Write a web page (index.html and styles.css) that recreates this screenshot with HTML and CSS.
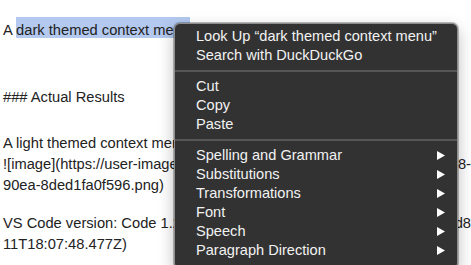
FILE: index.html
```html
<!DOCTYPE html>
<html lang="en">
<head>
<meta charset="utf-8">
<title>Context menu</title>
<link rel="stylesheet" href="styles.css">
</head>
<body>
<div class="doc">
  <p class="para p1"><span class="line">A <span class="sel">dark themed context menu</span></span></p>
  <p class="para p2"><span class="line">### Actual Results</span></p>
  <div class="para p3">
    <div class="line">A light themed context menu</div>
    <div class="line split"><span class="l">![image](https://user-images</span><span class="r">8-</span></div>
    <div class="line">90ea-8ded1fa0f596.png)</div>
  </div>
  <div class="para p4">
    <div class="line split"><span class="l">VS Code version: Code 1.256</span><span class="r">d8</span></div>
    <div class="line">11T18:07:48.477Z)</div>
  </div>
</div>

<div class="menu">
  <div class="item"><span>Look Up “dark themed context menu”</span></div>
  <div class="item"><span>Search with DuckDuckGo</span></div>
  <div class="sep"></div>
  <div class="item"><span>Cut</span></div>
  <div class="item"><span>Copy</span></div>
  <div class="item"><span>Paste</span></div>
  <div class="sep"></div>
  <div class="item"><span>Spelling and Grammar</span><svg class="arrow" viewBox="0 0 8 9" width="8" height="9"><polygon points="0,0 8,4.5 0,9"/></svg></div>
  <div class="item"><span>Substitutions</span><svg class="arrow" viewBox="0 0 8 9" width="8" height="9"><polygon points="0,0 8,4.5 0,9"/></svg></div>
  <div class="item"><span>Transformations</span><svg class="arrow" viewBox="0 0 8 9" width="8" height="9"><polygon points="0,0 8,4.5 0,9"/></svg></div>
  <div class="item"><span>Font</span><svg class="arrow" viewBox="0 0 8 9" width="8" height="9"><polygon points="0,0 8,4.5 0,9"/></svg></div>
  <div class="item"><span>Speech</span><svg class="arrow" viewBox="0 0 8 9" width="8" height="9"><polygon points="0,0 8,4.5 0,9"/></svg></div>
  <div class="item"><span>Paragraph Direction</span><svg class="arrow" viewBox="0 0 8 9" width="8" height="9"><polygon points="0,0 8,4.5 0,9"/></svg></div>
</div>
</body>
</html>
```

FILE: styles.css
```css
html, body {
  margin: 0;
  padding: 0;
  background: #ffffff;
  width: 471px;
  height: 265px;
  overflow: hidden;
}

.doc {
  padding: 20px 0 0 3px;
  font-family: "Liberation Sans", Arial, sans-serif;
  font-size: 14.7px;
  line-height: 21px;
  color: #222222;
}

.para {
  margin: 0;
}

.line {
  display: block;
  white-space: nowrap;
}

.p2 { margin-top: 46px; }
.p3 { margin-top: 25px; }
.p4 { margin-top: 17px; }

.sel {
  background: #b3c9ef;
  padding-top: 5px;
}

.split {
  display: flex;
  justify-content: space-between;
}

.split .r {
  flex: none;
}

.menu {
  position: absolute;
  top: 23px;
  left: 174px;
  width: 284px;
  box-sizing: border-box;
  background: #323232;
  border: 1px solid #8e8e8e;
  border-radius: 6px;
  padding: 3px 0 8px;
  font-family: "Liberation Sans", Arial, sans-serif;
  font-size: 14.6px;
  color: #f2f2f2;
  box-shadow: 0 0 0 1px rgba(0, 0, 0, 0.25), 0 6px 16px rgba(0, 0, 0, 0.28);
}

.item {
  height: 19px;
  line-height: 19px;
  padding: 0 12px 0 21px;
  display: flex;
  align-items: center;
  justify-content: space-between;
  white-space: nowrap;
}

.arrow {
  fill: #ffffff;
  flex: none;
}

.sep {
  height: 2px;
  background: #565656;
  margin: 5px 0;
}
```
